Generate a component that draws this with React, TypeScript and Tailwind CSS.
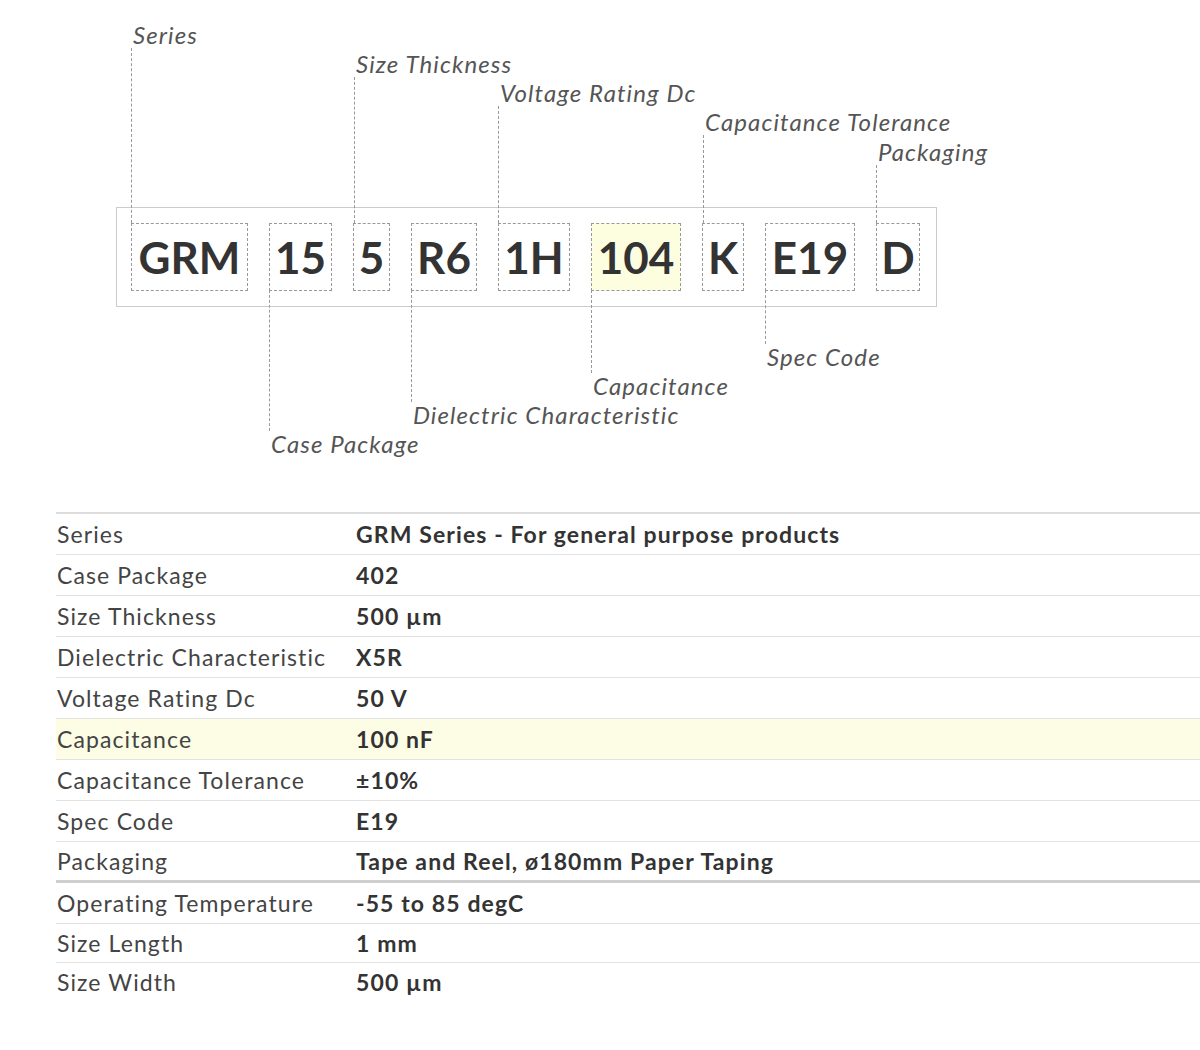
import React from "react";

const boxes = [
  { t: "GRM", w: 117 },
  { t: "15", w: 63 },
  { t: "5", w: 37 },
  { t: "R6", w: 66 },
  { t: "1H", w: 72 },
  { t: "104", w: 90, hl: true },
  { t: "K", w: 42 },
  { t: "E19", w: 90 },
  { t: "D", w: 44 },
];

const above = [
  { t: "Series", x: 131, y: 22 },
  { t: "Size Thickness", x: 354, y: 51 },
  { t: "Voltage Rating Dc", x: 498, y: 80 },
  { t: "Capacitance Tolerance", x: 703, y: 109 },
  { t: "Packaging", x: 876, y: 139 },
];
const below = [
  { t: "Spec Code", x: 765, y: 344 },
  { t: "Capacitance", x: 591, y: 373 },
  { t: "Dielectric Characteristic", x: 411, y: 402 },
  { t: "Case Package", x: 269, y: 431 },
];

const rows: [string, string, boolean?][] = [
  ["Series", "GRM Series - For general purpose products"],
  ["Case Package", "402"],
  ["Size Thickness", "500 µm"],
  ["Dielectric Characteristic", "X5R"],
  ["Voltage Rating Dc", "50 V"],
  ["Capacitance", "100 nF", true],
  ["Capacitance Tolerance", "±10%"],
  ["Spec Code", "E19"],
  ["Packaging", "Tape and Reel, ø180mm Paper Taping"],
  ["Operating Temperature", "-55 to 85 degC"],
  ["Size Length", "1 mm"],
  ["Size Width", "500 µm"],
];

function Label({ t, x, y, up }: { t: string; x: number; y: number; up: boolean }) {
  const text = (
    <div className="text-[24px] italic text-[#555] leading-[26px] tracking-[1.1px] whitespace-nowrap pl-[2px]">{t}</div>
  );
  const line = (
    <div className="border-l border-dashed border-[#999] grow" />
  );
  return up ? (
    <div className="absolute flex flex-col" style={{ left: x, top: y, height: 223 - y }}>
      {text}
      {line}
    </div>
  ) : (
    <div className="absolute flex flex-col" style={{ left: x, top: 290, height: y - 290 + 26 }}>
      <div className="border-l border-dashed border-[#999] h-[4px] grow" />
      {text}
    </div>
  );
}

export default function App() {
  return (
    <div className="relative w-[1200px] h-[1050px] bg-white overflow-hidden" style={{ fontFamily: "Lato, 'Open Sans', sans-serif" }}>
      <div className="pt-[207px] pl-[116px]">
        <div className="w-[821px] h-[100px] border border-[#cccccc] flex items-center pl-[14px] gap-[21px]">
          {boxes.map((b) => (
            <div
              key={b.t}
              className={`h-[68px] border border-dashed border-[#999] flex items-center justify-center text-[44px] font-bold text-[#333] ${b.hl ? "bg-[#fdfde0]" : ""}`}
              style={{ width: b.w }}
            >
              {b.t}
            </div>
          ))}
        </div>
      </div>
      {above.map((a) => <Label key={a.t} {...a} up />)}
      {below.map((a) => <Label key={a.t} {...a} up={false} />)}
      <div className="mt-[205px] ml-[56px] w-[1144px] border-t-2 border-[#dddddd]">
        {rows.map(([k, v, hl], i) => (
          <div
            key={k}
            className={`flex items-center text-[23px] tracking-[1.1px] ${i === 11 ? "h-[38px]" : i === 10 ? "h-[39px] border-b border-[#e2e2e2]" : i === 8 ? "h-[41px] border-b-[3px] border-[#cfcfcf]" : "h-[41px] border-b border-[#e2e2e2]"} ${hl ? "bg-[#fdfde6]" : ""}`}
          >
            <div className="w-[300px] pl-[1px] text-[#444]">{k}</div>
            <div className="font-bold text-[#333]">{v}</div>
          </div>
        ))}
      </div>
    </div>
  );
}
